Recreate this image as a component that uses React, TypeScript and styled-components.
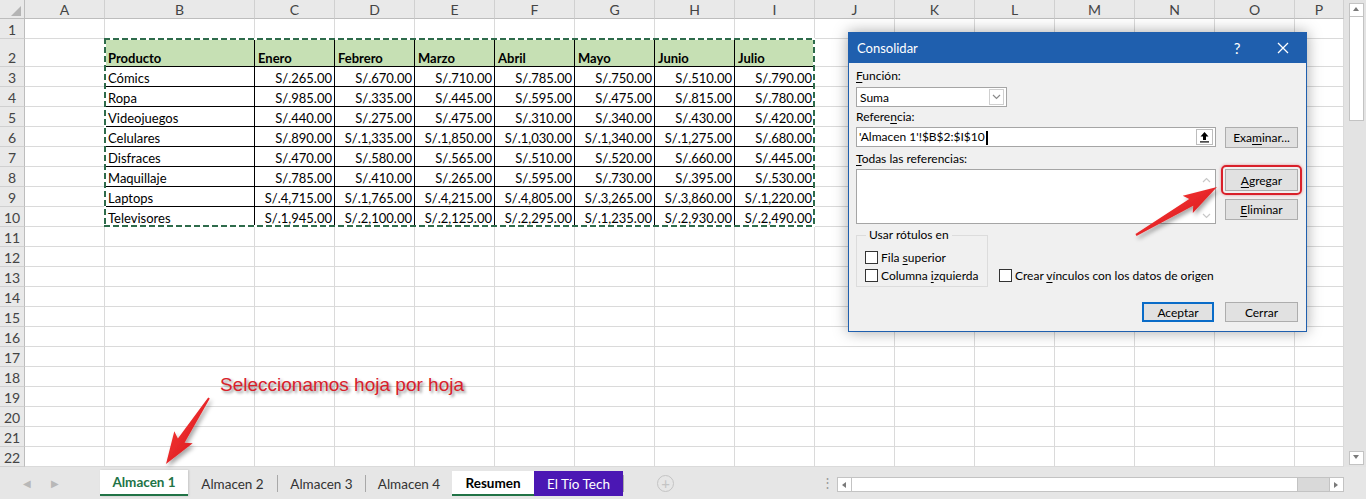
import React from 'react';
import styled, { createGlobalStyle, css } from 'styled-components';

const GlobalStyle = createGlobalStyle`
  html, body {
    margin: 0;
    padding: 0;
  }
  body {
    width: 1366px;
    height: 499px;
    overflow: hidden;
    background: #fff;
    font-family: Lato, 'Liberation Sans', sans-serif;
  }
  * {
    box-sizing: border-box;
  }
`;

const colors = {
  grid: '#DADADA',
  header: '#E9E9E9',
  headerLine: '#BDBDBD',
  headerText: '#444',
  tableFill: '#C6E0B4',
  excelGreen: '#217346',
  marquee: '#2E6B4B',
  dialogBlue: '#1F5FAE',
  dialogBg: '#F0F0F0',
  buttonBg: '#E1E1E1',
  buttonLine: '#ADADAD',
  red: '#D9202A',
  tabBar: '#E6E6E6',
  brand: '#4B17B4',
};

const COLS = ['A', 'B', 'C', 'D', 'E', 'F', 'G', 'H', 'I', 'J', 'K', 'L', 'M', 'N', 'O', 'P'];
const ROW_COUNT = 22;

const HEADINGS = ['Producto', 'Enero', 'Febrero', 'Marzo', 'Abril', 'Mayo', 'Junio', 'Julio'];
const PRODUCTS: Array<[string, string[]]> = [
  ['Cómics', ['265', '670', '710', '785', '750', '510', '790']],
  ['Ropa', ['985', '335', '445', '595', '475', '815', '780']],
  ['Videojuegos', ['440', '275', '475', '310', '340', '430', '420']],
  ['Celulares', ['890', '1,335', '1,850', '1,030', '1,340', '1,275', '680']],
  ['Disfraces', ['470', '580', '565', '510', '520', '660', '445']],
  ['Maquillaje', ['785', '410', '265', '595', '730', '395', '530']],
  ['Laptops', ['4,715', '1,765', '4,215', '4,805', '3,265', '3,860', '1,220']],
  ['Televisores', ['1,945', '2,100', '2,125', '2,295', '1,235', '2,930', '2,490']],
];

/* ---------- layout ---------- */

const Window = styled.div`
  position: relative;
  width: 1366px;
  height: 499px;
  overflow: hidden;
  display: flex;
  flex-direction: column;
`;

const Main = styled.div`
  display: flex;
  height: 467px;
`;

/* ---------- sheet ---------- */

const Sheet = styled.div`
  position: relative;
  display: grid;
  grid-template-columns: 25px 80px 150px repeat(13, 80px) 49px;
  grid-template-rows: 19px 20px 28px repeat(20, 20px);
  width: 1344px;
  height: 467px;
  overflow: hidden;
`;

const Corner = styled.div`
  background: ${colors.header};
  border-right: 1px solid ${colors.headerLine};
  border-bottom: 1px solid ${colors.headerLine};
`;

const ColHeader = styled.div`
  display: flex;
  align-items: center;
  justify-content: center;
  background: ${colors.header};
  border-right: 1px solid #D0D0D0;
  border-bottom: 1px solid ${colors.headerLine};
  color: ${colors.headerText};
  font-size: 14px;
`;

const RowHeader = styled.div`
  display: flex;
  align-items: flex-end;
  justify-content: center;
  background: ${colors.header};
  border-right: 1px solid ${colors.headerLine};
  border-bottom: 1px solid #D0D0D0;
  color: ${colors.headerText};
  font-size: 14px;
  line-height: 16px;
`;

const Cell = styled.div<{
  $fill?: boolean;
  $bold?: boolean;
  $right?: boolean;
  $edgeR?: boolean;
  $edgeB?: boolean;
}>`
  display: flex;
  align-items: flex-end;
  justify-content: ${({ $right }) => ($right ? 'flex-end' : 'flex-start')};
  padding: 0 2px 0 3px;
  border-right: 1px solid ${({ $edgeR }) => ($edgeR ? '#000' : colors.grid)};
  border-bottom: 1px solid ${({ $edgeB }) => ($edgeB ? '#000' : colors.grid)};
  background: ${({ $fill }) => ($fill ? colors.tableFill : '#fff')};
  color: #000;
  font-size: 13px;
  font-weight: ${({ $bold }) => ($bold ? 700 : 400)};
  line-height: 16px;
  white-space: nowrap;
  overflow: hidden;
`;

const ants = (dir: string) =>
  `repeating-linear-gradient(${dir}, ${colors.marquee} 0 6px, #fff 6px 9px)`;

/* copy marquee lies over cells B2:I10 */
const Marquee = styled.div`
  position: absolute;
  grid-column: 3 / 11;
  grid-row: 3 / 12;
  top: -1px;
  left: -1px;
  right: 0;
  bottom: 0;
  pointer-events: none;
  background:
    ${ants('90deg')} top left / 100% 2px no-repeat,
    ${ants('90deg')} bottom left / 100% 2px no-repeat,
    ${ants('180deg')} top left / 2px 100% no-repeat,
    ${ants('180deg')} top right / 2px 100% no-repeat;
`;

/* ---------- vertical scrollbar ---------- */

const VScroll = styled.div`
  width: 22px;
  display: flex;
  flex-direction: column;
  align-items: center;
  padding: 3px 0 2px 2px;
  background: #E3E3E3;
`;

const ScrollBtn = styled.div`
  width: 15px;
  height: 14px;
  display: flex;
  align-items: center;
  justify-content: center;
  background: #fff;
  border: 1px solid #C3C3C3;
`;

const VThumb = styled.div`
  width: 15px;
  height: 104px;
  background: #fff;
  border: 1px solid #C3C3C3;
  border-top: none;
`;

const VTrack = styled.div`
  flex: 1;
`;

/* ---------- sheet tabs ---------- */

const TabBar = styled.div`
  height: 32px;
  display: flex;
  align-items: flex-start;
  background: ${colors.tabBar};
  font-size: 13.5px;
`;

const Nav = styled.div`
  width: 100px;
  height: 32px;
  display: flex;
  align-items: center;
  gap: 20px;
  padding-left: 23px;
  color: #B8B8B8;
  font-size: 10px;
`;

type TabKind = 'active' | 'plain' | 'summary' | 'brand';

const Tab = styled.div<{ $kind: TabKind; $w: number }>`
  width: ${({ $w }) => $w}px;
  height: 25px;
  margin-top: 4px;
  display: flex;
  align-items: center;
  justify-content: center;
  color: #333;
  white-space: nowrap;
  ${({ $kind }) =>
    $kind === 'active' &&
    css`
      margin-top: 3px;
      height: 26px;
      background: #fff;
      color: ${colors.excelGreen};
      font-weight: 700;
      border-bottom: 2px solid ${colors.excelGreen};
      box-shadow: 1px 0 2px rgba(0, 0, 0, 0.15);
    `}
  ${({ $kind }) =>
    $kind === 'summary' &&
    css`
      background: #fff;
      color: #000;
      font-weight: 700;
      border-bottom: 2px solid ${colors.excelGreen};
    `}
  ${({ $kind }) =>
    $kind === 'brand' &&
    css`
      background: ${colors.brand};
      color: #fff;
    `}
`;

const TabSep = styled.div`
  width: 1px;
  height: 17px;
  margin-top: 8px;
  background: #A8A8A8;
`;

const AddSheet = styled.div`
  width: 17px;
  height: 17px;
  margin: 8px 0 0 33px;
  border: 1px solid #C4C4C4;
  border-radius: 50%;
  display: flex;
  align-items: center;
  justify-content: center;
  color: #C4C4C4;
  font-size: 15px;
  line-height: 1;
`;

const Splitter = styled.div`
  margin: 7px 0 0 146px;
  width: 14px;
  color: #9A9A9A;
  font-size: 13px;
  text-align: center;
`;

const HScroll = styled.div`
  display: flex;
  width: 507px;
  height: 15px;
  margin: 10px 0 0 3px;
  border: 1px solid #C3C3C3;
  background: #D9D9D9;
`;

const HArrow = styled.div<{ $end?: boolean }>`
  width: 14px;
  display: flex;
  align-items: center;
  justify-content: center;
  background: #fff;
  ${({ $end }) => ($end ? 'border-left: 1px solid #C3C3C3;' : 'border-right: 1px solid #C3C3C3;')}
`;

const HThumb = styled.div`
  width: 446px;
  background: #fff;
  border-right: 1px solid #C3C3C3;
`;

const HTrack = styled.div`
  flex: 1;
`;

/* ---------- dialog ---------- */

const Dialog = styled.div`
  position: absolute;
  left: 848px;
  top: 32px;
  width: 459px;
  z-index: 5;
  display: flex;
  flex-direction: column;
  background: ${colors.dialogBg};
  border: 1px solid ${colors.dialogBlue};
  box-shadow: 0 0 14px rgba(0, 0, 0, 0.35);
  color: #000;
  font-size: 12px;
`;

const TitleBar = styled.div`
  height: 30px;
  display: flex;
  align-items: center;
  padding-left: 8px;
  background: ${colors.dialogBlue};
  color: #fff;
  font-size: 13px;
`;

const TitleText = styled.div`
  flex: 1;
`;

const TitleBtn = styled.div`
  width: 46px;
  height: 30px;
  display: flex;
  align-items: center;
  justify-content: center;
  font-size: 15px;
`;

const Body = styled.div`
  display: flex;
  flex-direction: column;
  padding: 6px 8px 9px 7px;
`;

const Label = styled.div<{ $mt?: number }>`
  margin-top: ${({ $mt }) => $mt ?? 0}px;
  line-height: 14px;
  height: 14px;
`;

const Acc = styled.span`
  text-decoration: underline;
  text-underline-offset: 2px;
`;

const Select = styled.div`
  width: 151px;
  height: 20px;
  margin-top: 4px;
  display: flex;
  align-items: center;
  padding: 0 2px 0 3px;
  background: #fff;
  border: 1px solid #A5A5A5;
`;

const Grow = styled.div`
  flex: 1;
`;

const DropBtn = styled.div`
  width: 15px;
  height: 16px;
  display: flex;
  align-items: center;
  justify-content: center;
  border: 1px solid #CFCFCF;
`;

const Row = styled.div<{ $mt?: number; $align?: string; $justify?: string; $gap?: number }>`
  display: flex;
  margin-top: ${({ $mt }) => $mt ?? 0}px;
  gap: ${({ $gap }) => $gap ?? 0}px;
  align-items: ${({ $align }) => $align ?? 'flex-start'};
  justify-content: ${({ $justify }) => $justify ?? 'space-between'};
`;

const TextBox = styled.div`
  width: 360px;
  height: 20px;
  display: flex;
  align-items: center;
  padding: 0 2px 0 2px;
  background: #fff;
  border: 1px solid #A5A5A5;
`;

const Caret = styled.span`
  display: inline-block;
  width: 2px;
  height: 14px;
  margin-left: 1px;
  background: #000;
  vertical-align: middle;
`;

const CollapseBtn = styled.div`
  width: 17px;
  height: 16px;
  display: flex;
  align-items: center;
  justify-content: center;
  border: 1px solid #BDBDBD;
`;

const ListBox = styled.div`
  width: 360px;
  height: 55px;
  display: flex;
  background: #fff;
  border: 1px solid #A5A5A5;
`;

const ListScroll = styled.div`
  width: 17px;
  display: flex;
  flex-direction: column;
  justify-content: space-between;
  align-items: center;
  padding: 7px 0 4px;
`;

const ButtonStack = styled.div`
  display: flex;
  flex-direction: column;
  gap: 8px;
`;

const Button = styled.div<{ $h?: number; $w?: number; $default?: boolean; $highlight?: boolean }>`
  position: relative;
  width: ${({ $w }) => $w ?? 73}px;
  height: ${({ $h }) => $h ?? 21}px;
  display: flex;
  align-items: center;
  justify-content: center;
  background: ${colors.buttonBg};
  border: 1px solid ${colors.buttonLine};
  ${({ $default }) =>
    $default &&
    css`
      border: 2px solid #0A6CC8;
    `}
  ${({ $highlight }) =>
    $highlight &&
    css`
      &::after {
        content: '';
        position: absolute;
        inset: -5px;
        border: 2px solid ${colors.red};
        border-radius: 5px;
        box-shadow: 0 0 3px rgba(217, 32, 42, 0.45);
      }
    `}
`;

const Group = styled.fieldset`
  width: 132px;
  margin: 4px 0 0 0;
  padding: 9px 8px 4px 8px;
  min-inline-size: 0;
  border: 1px solid #DCDCDC;
  display: flex;
  flex-direction: column;
  gap: 5px;
`;

const Legend = styled.legend`
  margin-left: 1px;
  padding: 0 3px;
  line-height: 14px;
`;

const Check = styled.label<{ $ml?: number; $mb?: number }>`
  display: flex;
  align-items: center;
  gap: 3px;
  height: 13px;
  margin-left: ${({ $ml }) => $ml ?? 0}px;
  margin-bottom: ${({ $mb }) => $mb ?? 0}px;
  white-space: nowrap;
`;

const Box = styled.span`
  width: 13px;
  height: 13px;
  background: #fff;
  border: 1px solid #333;
`;

/* ---------- annotations ---------- */

const Overlay = styled.svg`
  position: absolute;
  left: 0;
  top: 0;
  z-index: 10;
  pointer-events: none;
`;

const Callout = styled.div`
  position: absolute;
  left: 220px;
  top: 374px;
  z-index: 10;
  color: ${colors.red};
  font-family: 'Liberation Sans', Arial, sans-serif;
  font-size: 19px;
  white-space: nowrap;
  text-shadow: 2px 2px 3px rgba(0, 0, 0, 0.45);
`;

const arrowPoints = (
  x1: number,
  y1: number,
  x2: number,
  y2: number,
  head: number,
  headW: number,
  shaftW: number,
  tailW: number
) => {
  const dx = x2 - x1;
  const dy = y2 - y1;
  const len = Math.hypot(dx, dy);
  const ux = dx / len;
  const uy = dy / len;
  const nx = -uy;
  const ny = ux;
  const bx = x2 - ux * head;
  const by = y2 - uy * head;
  const pts = [
    [x1 + (nx * tailW) / 2, y1 + (ny * tailW) / 2],
    [bx + (nx * shaftW) / 2, by + (ny * shaftW) / 2],
    [bx + (nx * headW) / 2 - ux * 4, by + (ny * headW) / 2 - uy * 4],
    [x2, y2],
    [bx - (nx * headW) / 2 - ux * 4, by - (ny * headW) / 2 - uy * 4],
    [bx - (nx * shaftW) / 2, by - (ny * shaftW) / 2],
    [x1 - (nx * tailW) / 2, y1 - (ny * tailW) / 2],
  ];
  return pts.map(([x, y]) => `${x.toFixed(1)},${y.toFixed(1)}`).join(' ');
};

const Chevron = ({ up, color = '#B5B5B5' }: { up?: boolean; color?: string }) => (
  <svg width="9" height="6" viewBox="0 0 9 6">
    <path d={up ? 'M1 5 L4.5 1.5 L8 5' : 'M1 1 L4.5 4.5 L8 1'} fill="none" stroke={color} strokeWidth="1.2" />
  </svg>
);

const Tri = ({ dir }: { dir: 'up' | 'down' | 'left' | 'right' }) => {
  const d = {
    up: 'M1 5 L4 1 L7 5 Z',
    down: 'M1 1 L4 5 L7 1 Z',
    left: 'M5 1 L1 4 L5 7 Z',
    right: 'M1 1 L5 4 L1 7 Z',
  }[dir];
  return (
    <svg width="8" height="8" viewBox="0 0 8 8">
      <path d={d} fill="#7A7A7A" />
    </svg>
  );
};

const cellFor = (row: number, col: number) => {
  const inTable = row >= 2 && row <= 10 && col >= 1 && col <= 8;
  const edgeR = inTable || (col === 0 && row >= 2 && row <= 10);
  const edgeB = inTable || (row === 1 && col >= 1 && col <= 8);
  let text = '';
  let right = false;
  if (row === 2 && inTable) text = HEADINGS[col - 1];
  if (row >= 3 && inTable) {
    const [name, values] = PRODUCTS[row - 3];
    if (col === 1) text = name;
    else {
      text = `S/.${values[col - 2]}.00`;
      right = true;
    }
  }
  return (
    <Cell
      key={`${row}-${col}`}
      $edgeR={edgeR}
      $edgeB={edgeB}
      $fill={row === 2 && inTable}
      $bold={row === 2 && inTable}
      $right={right}
    >
      {text}
    </Cell>
  );
};

const SpreadSheet = () => {
  const rows: React.ReactNode[] = [];
  for (let r = 1; r <= ROW_COUNT; r++) {
    rows.push(<RowHeader key={`rh-${r}`}>{r}</RowHeader>);
    COLS.forEach((_, c) => rows.push(cellFor(r, c)));
  }
  return (
    <Sheet>
      <Corner>
        <svg width="24" height="18" viewBox="0 0 24 18" style={{ display: 'block' }}>
          <path d="M21 6 L21 16 L11 16 Z" fill="#B4B4B4" />
        </svg>
      </Corner>
      {COLS.map((c) => (
        <ColHeader key={c}>{c}</ColHeader>
      ))}
      {rows}
      <Marquee />
    </Sheet>
  );
};

const ConsolidarDialog = () => (
  <Dialog>
    <TitleBar>
      <TitleText>Consolidar</TitleText>
      <TitleBtn>?</TitleBtn>
      <TitleBtn>
        <svg width="12" height="12" viewBox="0 0 12 12">
          <path d="M1 1 L11 11 M11 1 L1 11" stroke="#fff" strokeWidth="1.3" />
        </svg>
      </TitleBtn>
    </TitleBar>
    <Body>
      <Label>
        <Acc>F</Acc>unción:
      </Label>
      <Select>
        <Grow>Suma</Grow>
        <DropBtn>
          <Chevron color="#8A8A8A" />
        </DropBtn>
      </Select>
      <Label $mt={3}>
        Refere<Acc>n</Acc>cia:
      </Label>
      <Row $mt={3}>
        <TextBox>
          <Grow>
            'Almacen 1'!$B$2:$I$10
            <Caret />
          </Grow>
          <CollapseBtn>
            <svg width="11" height="12" viewBox="0 0 11 12">
              <path d="M5.5 1 L9.5 5.5 L7 5.5 L7 9 L4 9 L4 5.5 L1.5 5.5 Z" fill="#000" />
              <rect x="1" y="10.3" width="9" height="1.2" fill="#000" />
            </svg>
          </CollapseBtn>
        </TextBox>
        <Button>
          Exa<Acc>m</Acc>inar...
        </Button>
      </Row>
      <Label $mt={4}>
        <Acc>T</Acc>odas las referencias:
      </Label>
      <Row $mt={3}>
        <ListBox>
          <Grow />
          <ListScroll>
            <Chevron up color="#C8C8C8" />
            <Chevron color="#C8C8C8" />
          </ListScroll>
        </ListBox>
        <ButtonStack>
          <Button $h={22} $highlight>
            <span>
              <Acc>A</Acc>gregar
            </span>
          </Button>
          <Button>
            <span>
              <Acc>E</Acc>liminar
            </span>
          </Button>
        </ButtonStack>
      </Row>
      <Row $align="flex-end" $justify="flex-start">
        <Group>
          <Legend>Usar rótulos en</Legend>
          <Check>
            <Box />
            <span>
              Fila <Acc>s</Acc>uperior
            </span>
          </Check>
          <Check>
            <Box />
            <span>
              Columna <Acc>i</Acc>zquierda
            </span>
          </Check>
        </Group>
        <Check $ml={11} $mb={5}>
          <Box />
          <span>
            Crear <Acc>v</Acc>ínculos con los datos de origen
          </span>
        </Check>
      </Row>
      <Row $mt={15} $justify="flex-end" $gap={11}>
        <Button $h={20} $w={72} $default>
          Aceptar
        </Button>
        <Button $h={20}>Cerrar</Button>
      </Row>
    </Body>
  </Dialog>
);

const SheetTabs = () => (
  <TabBar>
    <Nav>
      <span>◀</span>
      <span>▶</span>
    </Nav>
    <Tab $kind="active" $w={88}>
      Almacen 1
    </Tab>
    <Tab $kind="plain" $w={89}>
      Almacen 2
    </Tab>
    <TabSep />
    <Tab $kind="plain" $w={87}>
      Almacen 3
    </Tab>
    <TabSep />
    <Tab $kind="plain" $w={86}>
      Almacen 4
    </Tab>
    <Tab $kind="summary" $w={82}>
      Resumen
    </Tab>
    <Tab $kind="brand" $w={89}>
      El Tío Tech
    </Tab>
    <TabSep />
    <AddSheet>+</AddSheet>
    <Splitter>⋮</Splitter>
    <HScroll>
      <HArrow>
        <Tri dir="left" />
      </HArrow>
      <HThumb />
      <HTrack />
      <HArrow $end>
        <Tri dir="right" />
      </HArrow>
    </HScroll>
  </TabBar>
);

const App = () => (
  <Window>
    <GlobalStyle />
    <Main>
      <SpreadSheet />
      <VScroll>
        <ScrollBtn>
          <Tri dir="up" />
        </ScrollBtn>
        <VThumb />
        <VTrack />
        <ScrollBtn>
          <Tri dir="down" />
        </ScrollBtn>
      </VScroll>
    </Main>
    <SheetTabs />
    <ConsolidarDialog />
    <Callout>Seleccionamos hoja por hoja</Callout>
    <Overlay width="1366" height="499" viewBox="0 0 1366 499">
      <defs>
        <linearGradient id="arrowFill" x1="0" y1="0" x2="1" y2="1">
          <stop offset="0" stopColor="#FF4038" />
          <stop offset="1" stopColor="#D0101A" />
        </linearGradient>
        <filter id="arrowShadow" x="-20%" y="-20%" width="140%" height="140%">
          <feDropShadow dx="2" dy="3" stdDeviation="2" floodColor="#000" floodOpacity="0.35" />
        </filter>
      </defs>
      <polygon
        points={arrowPoints(209, 398, 166, 464, 28, 22, 8, 2)}
        fill="url(#arrowFill)"
        filter="url(#arrowShadow)"
      />
      <polygon
        points={arrowPoints(1136, 235, 1217, 187, 30, 20, 8, 2)}
        fill="url(#arrowFill)"
        filter="url(#arrowShadow)"
      />
    </Overlay>
  </Window>
);

export default App;
